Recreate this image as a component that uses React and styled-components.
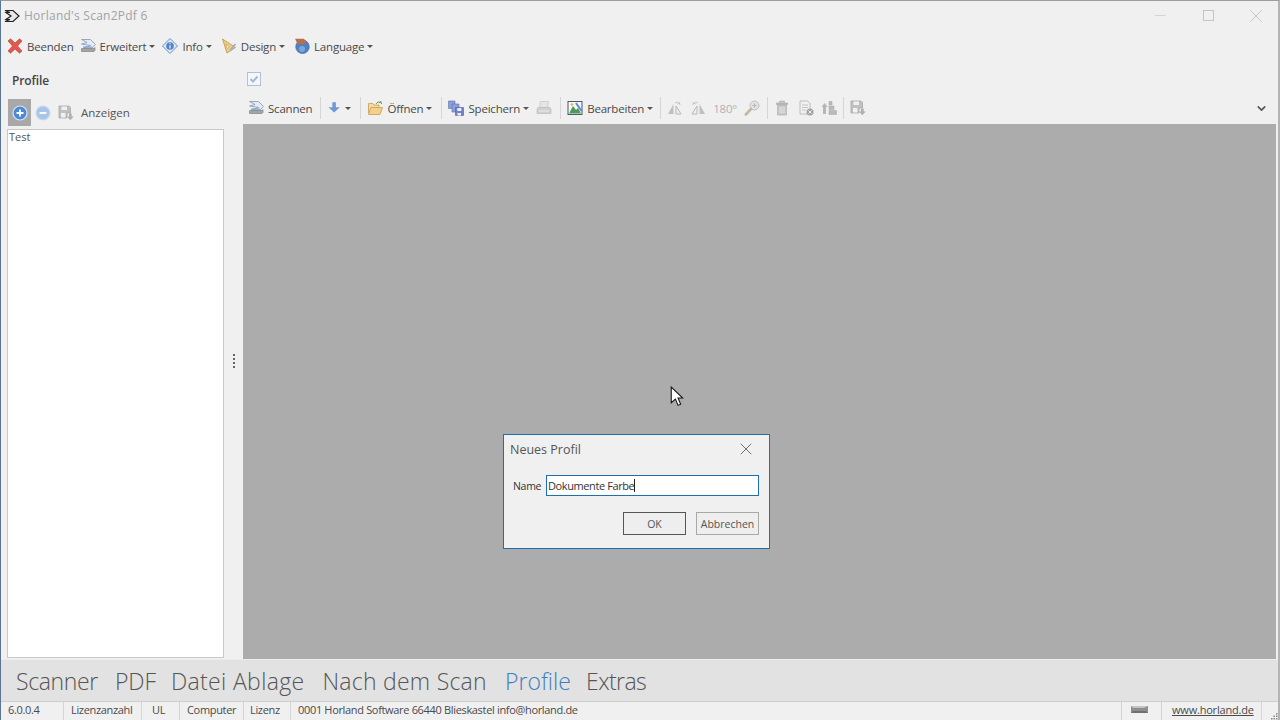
import React from "react";
import styled, { createGlobalStyle } from "styled-components";
import { ChevronDown, Minus, X } from "lucide-react";

const GlobalStyle = createGlobalStyle`
  html, body {
    margin: 0;
    padding: 0;
    width: 1280px;
    height: 720px;
    overflow: hidden;
  }
  body {
    font-family: "Open Sans", "Noto Sans", sans-serif;
    font-size: 12px;
    color: #444;
  }
`;

const Window = styled.div`
  position: relative;
  box-sizing: border-box;
  width: 1280px;
  height: 720px;
  display: flex;
  flex-direction: column;
  background: #f0f0f0;
  border-top: 1px solid #9c9c9c;
  border-left: 1px solid #5a7590;
  border-right: 2px solid #b4b4b4;
  overflow: hidden;
`;

const TitleBar = styled.div`
  height: 29px;
  display: flex;
  align-items: center;
  padding-left: 3px;
  flex-shrink: 0;
`;

const TitleText = styled.span`
  margin-left: 4px;
  font-size: 12px;
  letter-spacing: 0.25px;
  color: #a2a2a2;
`;

const WindowButtons = styled.div`
  margin-left: auto;
  margin-right: -2px;
  display: flex;
  align-items: center;
  color: #bdbdbd;
`;

const WindowButton = styled.div`
  width: 48px;
  height: 20px;
  display: flex;
  align-items: center;
  justify-content: center;
`;

const MaxBox = styled.span`
  width: 9px;
  height: 9px;
  border: 1px solid #c4c4c4;
`;

const MenuBar = styled.div`
  height: 32px;
  display: flex;
  align-items: center;
  padding-left: 6px;
  flex-shrink: 0;
`;

const Item = styled.div`
  display: flex;
  align-items: center;
  gap: 4px;
  margin-left: ${(p) => p.$ml ?? 0}px;
  margin-right: ${(p) => p.$mr ?? 7}px;
  color: ${(p) => (p.$muted ? "#b0b0b0" : "#4a4a4a")};
  white-space: nowrap;
  font-size: 11.5px;
  letter-spacing: -0.2px;
`;

const Caret = styled.span`
  width: 0;
  height: 0;
  margin: 0 -1px;
  border-left: 3px solid transparent;
  border-right: 3px solid transparent;
  border-top: 3px solid #555;
`;

const Main = styled.div`
  flex: 1;
  min-height: 0;
  display: flex;
  padding-top: 1px;
`;

const Sidebar = styled.div`
  width: 223px;
  flex-shrink: 0;
  display: flex;
  flex-direction: column;
  padding-left: 6px;
  box-sizing: border-box;
`;

const SideTitle = styled.div`
  height: 33px;
  padding: 9px 0 0 5px;
  box-sizing: border-box;
  font-weight: 600;
  font-size: 12px;
  letter-spacing: -0.1px;
  color: #444;
`;

const SideTools = styled.div`
  height: 33px;
  display: flex;
  align-items: center;
  padding-left: 1px;
`;

const ToolSlot = styled.div`
  width: 23px;
  height: 27px;
  display: flex;
  align-items: center;
  justify-content: center;
  background: ${(p) => (p.$active ? "#a8a8a8" : "transparent")};
`;

const ShowLabel = styled.span`
  margin-left: 4px;
  font-size: 11.5px;
  color: #555;
`;

const ProfileList = styled.div`
  flex: 1;
  margin-bottom: 1px;
  background: #fff;
  border: 1px solid #c8c8c8;
  padding: 0 1px;
  font-size: 11px;
  line-height: 14px;
  color: #555;
`;

const Splitter = styled.div`
  width: 19px;
  flex-shrink: 0;
  display: flex;
  flex-direction: column;
  align-items: center;
  justify-content: center;
  gap: 2px;
`;

const Dot = styled.span`
  width: 2px;
  height: 2px;
  background: #666;
`;

const Content = styled.div`
  flex: 1;
  min-width: 0;
  display: flex;
  flex-direction: column;
`;

const CheckRow = styled.div`
  height: 30px;
  display: flex;
  align-items: center;
  padding: 2px 0 0 4px;
  box-sizing: border-box;
`;

const CheckBox = styled.div`
  width: 14px;
  height: 14px;
  box-sizing: border-box;
  background: #f4f6fb;
  border: 1px solid #b4bfd6;
  display: flex;
  align-items: center;
  justify-content: center;
`;

const Toolbar = styled.div`
  height: 31px;
  display: flex;
  align-items: center;
  padding: 0 0 1px 5px;
  box-sizing: border-box;
`;

const Sep = styled.span`
  width: 1px;
  height: 22px;
  background: #d6d6d6;
  margin-right: 6px;
`;

const ExpandButton = styled.div`
  margin-left: auto;
  margin-right: 10px;
  display: flex;
  color: #555;
`;

const Canvas = styled.div`
  flex: 1;
  margin-right: 2px;
  background: #acacac;
`;

const TabBar = styled.div`
  height: 42px;
  flex-shrink: 0;
  display: flex;
  align-items: center;
  padding-left: 15px;
  background: #e2e2e2;
  border-top: 1px solid #ececec;
  box-sizing: border-box;
`;

const Tab = styled.span`
  margin-left: ${(p) => p.$ml ?? 0}px;
  font-weight: 300;
  font-size: 23px;
  letter-spacing: ${(p) => p.$ls ?? 0}px;
  color: ${(p) => (p.$active ? "#3f7fbd" : "#555")};
`;

const StatusBar = styled.div`
  height: 19px;
  flex-shrink: 0;
  display: flex;
  background: #f0f0f0;
  border-top: 1px solid #cfcfcf;
  box-sizing: border-box;
  font-size: 11px;
  letter-spacing: -0.33px;
  color: #4a4a4a;
`;

const Cell = styled.div`
  width: ${(p) => p.$w}px;
  flex-shrink: 0;
  box-sizing: border-box;
  padding: 0 0 3px ${(p) => p.$pl ?? 7}px;
  border-right: 1px solid #d4d4d4;
  white-space: nowrap;
  display: flex;
  align-items: center;
`;

const WideCell = styled(Cell)`
  flex: 1;
  width: auto;
`;

const WebLink = styled.span`
  text-decoration: underline;
  font-size: 11px;
  letter-spacing: -0.2px;
`;

const GripCell = styled.div`
  width: 16px;
  flex-shrink: 0;
  display: flex;
  justify-content: flex-end;
  align-items: flex-end;
`;

const Dialog = styled.div`
  position: absolute;
  left: 502px;
  top: 433px;
  width: 267px;
  height: 115px;
  box-sizing: border-box;
  background: #f0f0f0;
  border: 1px solid #1c6fb0;
  display: flex;
  flex-direction: column;
`;

const DialogHead = styled.div`
  height: 28px;
  display: flex;
  align-items: center;
  justify-content: space-between;
  padding: 0 13px 0 6px;
  font-size: 12.5px;
  color: #555;
  box-sizing: border-box;
`;

const DialogRow = styled.div`
  display: flex;
  align-items: center;
  margin-top: 12px;
  padding-left: 9px;
  gap: 5px;
`;

const NameLabel = styled.span`
  width: 28px;
  font-size: 10.5px;
  letter-spacing: -0.3px;
  color: #333;
`;

const NameInput = styled.div`
  width: 213px;
  height: 21px;
  box-sizing: border-box;
  background: #fff;
  border: 1px solid #1f6fae;
  padding-left: 1px;
  display: flex;
  align-items: center;
  font-size: 11px;
  letter-spacing: -0.4px;
  color: #333;
`;

const TextCaret = styled.span`
  width: 1px;
  height: 13px;
  background: #222;
`;

const DialogButtons = styled.div`
  margin-top: 16px;
  display: flex;
  justify-content: flex-end;
  gap: 10px;
  padding-right: 10px;
`;

const DialogButton = styled.div`
  height: 23px;
  width: 63px;
  box-sizing: border-box;
  border: 1px solid ${(p) => (p.$primary ? "#555" : "#a8a8a8")};
  background: #eeeeee;
  display: flex;
  align-items: center;
  justify-content: center;
  font-size: 10.5px;
  color: #555;
`;

const Cursor = styled.svg`
  position: absolute;
  left: 669px;
  top: 385px;
`;

const Ico = ({ size = 16, children, muted }) => (
  <svg width={size} height={size} viewBox="0 0 16 16" style={muted ? { opacity: 0.55 } : undefined}>
    {children}
  </svg>
);

const AppIcon = () => (
  <Ico>
    <path d="M1 2.500h8l6 5.500-6 5.500H1l5-2H2l5-3.500-5-3.500h4z" fill="#e8e8e8" stroke="#222" strokeWidth="1.200" />
  </Ico>
);

const ExitIcon = () => (
  <Ico>
    <path d="M1 3 3.500 .8 8 5 12.500 .8 15 3 10.500 8 15 13 12.500 15.200 8 11 3.500 15.200 1 13 5.500 8z" fill="#e2574e" stroke="#b83a35" strokeWidth=".6" />
  </Ico>
);

const ScanIcon = () => (
  <Ico>
    <path d="M1.500 1.500h9l5 5-3.500 3.500H3.500l7-2.500L1.500 6 7 4.500z" fill="#e4eaf2" stroke="#8497ae" strokeWidth=".8" />
    <path d="M1.500 10.500H14l1-1v3l-1 1H1.500z" fill="#a4a4a4" stroke="#6b6b6b" strokeWidth=".5" />
    <path d="M3 9h9" stroke="#6fa0d8" strokeWidth="1" />
  </Ico>
);

const InfoIcon = () => (
  <Ico>
    <path d="M8 .5 15.500 8 8 15.500.5 8z" fill="#dce7f6" stroke="#6e8fc0" strokeWidth="1" />
    <circle cx="8" cy="8" r="3.800" fill="#4f84c9" />
    <path d="M8 5.300v1M8 7.300v3.200" stroke="#fff" strokeWidth="1.100" />
  </Ico>
);

const DesignIcon = () => (
  <Ico>
    <path d="M1.500 1 14.500 9.500 6 15z" fill="#f0cd85" stroke="#bf9040" strokeWidth=".8" />
    <path d="M5 6l3.500 3-2.500 1.500z" fill="#f7f0dd" stroke="#bf9040" strokeWidth=".5" />
    <path d="M9 12.500l5.500-6.500" stroke="#9ab0cc" strokeWidth="1.800" />
  </Ico>
);

const LanguageIcon = () => (
  <Ico>
    <circle cx="8.500" cy="8.800" r="6.800" fill="#4f7fc4" stroke="#3e659f" strokeWidth=".6" />
    <path d="M1 .8h8.500L13 3.500 9.500 6.500 3.500 6z" fill="#b5714f" />
    <circle cx="8" cy="11" r="3" fill="#7ea5da" />
  </Ico>
);

const PlusIcon = () => (
  <Ico>
    <circle cx="8" cy="8" r="7" fill="#4c88d8" stroke="#d6e6fa" strokeWidth="1.200" />
    <path d="M8 4.500v7M4.500 8h7" stroke="#fff" strokeWidth="1.800" />
  </Ico>
);

const MinusIcon = () => (
  <Ico>
    <circle cx="8" cy="8" r="7" fill="#a9c5e6" stroke="#c9daf0" strokeWidth="1.200" />
    <path d="M4.500 8h7" stroke="#fff" strokeWidth="1.800" />
  </Ico>
);

const SaveDownIcon = () => (
  <Ico muted>
    <path d="M1 1h10l1.500 1.500V8H9v5H1z" fill="#9a9a9a" stroke="#6e6e6e" strokeWidth=".8" />
    <path d="M3.500 1.500h5.500v3.500H3.500zM3 8h4.500v4.500H3z" fill="#f0f0f0" />
    <path d="M11 8.500v3H9l3.300 3.800 3.400-3.800h-2v-3z" fill="#7c7c7c" />
  </Ico>
);

const ArrowDownIcon = () => (
  <Ico size={14}>
    <path d="M5 1.500h4V7h4.500L7 13 .5 7H5z" fill="#6f98d4" />
  </Ico>
);

const OpenIcon = () => (
  <Ico>
    <path d="M1.500 13V3.500H6L7 5h5v3" fill="#f3d9a4" stroke="#c99c52" strokeWidth=".8" />
    <path d="M1.500 14.500 4 7.500h11.500L13 14.500z" fill="#f5d08c" stroke="#c99c52" strokeWidth=".8" />
    <path d="M9 4c1-2 3-2.500 4.500-1.500M14.500 4l-.5-2.500-2 1.500" fill="none" stroke="#62a04a" strokeWidth="1" />
  </Ico>
);

const SaveAllIcon = () => (
  <Ico>
    <path d="M.5 1h6.500v7.500H.5z" fill="#8ea0d8" stroke="#5d6ea8" strokeWidth=".6" />
    <path d="M4 4h7v8H4z" fill="#8ea0d8" stroke="#5d6ea8" strokeWidth=".6" />
    <path d="M7.500 7.500h8v8h-8z" fill="#6f83c6" stroke="#4d5e98" strokeWidth=".6" />
    <path d="M9.300 8h4v3h-4zM9.500 13H13v2.500H9.500z" fill="#eef" />
  </Ico>
);

const PrintIcon = () => (
  <Ico>
    <path d="M4.500 1.500h8l-1 6h-8z" fill="#e4e4e4" stroke="#c4c4c4" strokeWidth=".7" />
    <path d="M2 7.500h12l1 2v4H1v-4z" fill="#d0d0d0" stroke="#bababa" strokeWidth=".7" />
    <path d="M3 11h10" stroke="#ececec" />
  </Ico>
);

const EditIcon = () => (
  <Ico>
    <rect x="1" y="1.500" width="14" height="13" fill="#f5f7f8" stroke="#48596a" strokeWidth="1" />
    <path d="M2 13.500 6 6l3 4 2-2 3 5.500z" fill="#4d9a58" />
    <path d="M9 3l5.500 8" stroke="#5f8fcc" strokeWidth="2" />
    <circle cx="5" cy="4.500" r="1.300" fill="#e4b24f" />
  </Ico>
);

const FlipIcon = ({ mirror }) => (
  <Ico muted>
    <g transform={mirror ? "matrix(-1 0 0 1 16 0)" : undefined}>
      <path d="M1 14 6.500 4v10z" fill="#9a9a9a" />
      <path d="M9 14V6l5 8z" fill="none" stroke="#8a8a8a" strokeWidth="1" />
      <path d="M8 3c2-1.500 3.500-.5 4 1M13 5l-.5-2.500-2 1.500" fill="none" stroke="#8a8a8a" strokeWidth=".8" />
    </g>
  </Ico>
);

const ZoomIcon = () => (
  <Ico muted>
    <circle cx="10.500" cy="5.500" r="4.500" fill="#d8d8d8" stroke="#999" strokeWidth="1" />
    <path d="M8.500 5.500h4M10.500 3.500v4" stroke="#888" strokeWidth="1" />
    <path d="M7 9 1.800 14.500" stroke="#a08c60" strokeWidth="2.600" strokeLinecap="round" />
  </Ico>
);

const TrashIcon = () => (
  <Ico muted>
    <path d="M5.500 2.500V1.200h5v1.300M2.500 3h11v1.500h-11z" fill="#8a8a8a" stroke="#777" strokeWidth=".7" />
    <path d="M3.500 5h9v10h-9z" fill="#a2a2a2" stroke="#7c7c7c" strokeWidth=".7" />
    <path d="M6 6.500v7M8 6.500v7M10 6.500v7" stroke="#e4e4e4" strokeWidth=".9" />
  </Ico>
);

const DocRemoveIcon = () => (
  <Ico muted>
    <path d="M2 1h7.500L12 3.500V14H2z" fill="#f2f2f2" stroke="#8a8a8a" strokeWidth=".9" />
    <path d="M4 5h6M4 7.500h6M4 10h4" stroke="#8a8a8a" strokeWidth=".8" />
    <circle cx="12" cy="12" r="3.500" fill="#666" />
    <path d="M10.500 10.500l3 3M13.500 10.500l-3 3" stroke="#fff" strokeWidth=".9" />
  </Ico>
);

const SortIcon = () => (
  <Ico muted>
    <path d="M3.500 3 6.800 7H5v7H2V7H.5z" fill="#8a8a8a" />
    <path d="M8 1.500h3V5H8zM8 6h5v3.500H8zM8 10.500h7.500V14.500H8z" fill="#8f8f8f" stroke="#6f6f6f" strokeWidth=".5" />
  </Ico>
);

const CheckMark = () => (
  <svg width="10" height="10" viewBox="0 0 10 10">
    <path d="M1.500 5 4 7.500 8.500 2.500" fill="none" stroke="#a9b8d8" strokeWidth="2" />
  </svg>
);

const PluggedIcon = () => (
  <svg width="17" height="7" viewBox="0 0 17 7">
    <rect width="17" height="7" fill="#8e8e8e" />
    <path d="M0 0h17l-4 2H2z" fill="#c4c4c4" />
    <path d="M2 5h13l2 2H0z" fill="#6f6f6f" />
  </svg>
);

const ResizeGrip = () => (
  <svg width="7" height="7" viewBox="0 0 7 7" fill="#8a8a8a">
    <rect x="5" y="0" width="1.500" height="1.500" />
    <rect x="2.500" y="2.500" width="1.500" height="1.500" />
    <rect x="5" y="2.500" width="1.500" height="1.500" />
    <rect x="0" y="5" width="1.500" height="1.500" />
    <rect x="2.500" y="5" width="1.500" height="1.500" />
    <rect x="5" y="5" width="1.500" height="1.500" />
  </svg>
);

const CloseGlyph = ({ size, color }) => (
  <X size={size} strokeWidth={0.9} color={color} />
);

export default function App() {
  return (
    <Window>
      <GlobalStyle />
      <TitleBar>
        <AppIcon />
        <TitleText>Horland's Scan2Pdf 6</TitleText>
        <WindowButtons>
          <WindowButton><Minus size={17} strokeWidth={0.8} /></WindowButton>
          <WindowButton><MaxBox /></WindowButton>
          <WindowButton><CloseGlyph size={22} color="#bdbdbd" /></WindowButton>
        </WindowButtons>
      </TitleBar>
      <MenuBar>
        <Item $mr={6}><ExitIcon />Beenden</Item>
        <Item $mr={8}><ScanIcon />Erweitert<Caret /></Item>
        <Item $mr={10}><InfoIcon />Info<Caret /></Item>
        <Item $mr={10}><DesignIcon />Design<Caret /></Item>
        <Item><LanguageIcon />Language<Caret /></Item>
      </MenuBar>
      <Main>
        <Sidebar>
          <SideTitle>Profile</SideTitle>
          <SideTools>
            <ToolSlot $active><PlusIcon /></ToolSlot>
            <ToolSlot><MinusIcon /></ToolSlot>
            <ToolSlot><SaveDownIcon /></ToolSlot>
            <ShowLabel>Anzeigen</ShowLabel>
          </SideTools>
          <ProfileList>Test</ProfileList>
        </Sidebar>
        <Splitter>
          <Dot /><Dot /><Dot /><Dot />
        </Splitter>
        <Content>
          <CheckRow>
            <CheckBox><CheckMark /></CheckBox>
          </CheckRow>
          <Toolbar>
            <Item $mr={8}><ScanIcon />Scannen</Item>
            <Sep />
            <Item $ml={1} $mr={10}><ArrowDownIcon /><Caret /></Item>
            <Sep />
            <Item $mr={10}><OpenIcon />Öffnen<Caret /></Item>
            <Sep />
            <Item $mr={8}><SaveAllIcon />Speichern<Caret /></Item>
            <Item $mr={8}><PrintIcon /></Item>
            <Sep />
            <Item $mr={8}><EditIcon />Bearbeiten<Caret /></Item>
            <Sep />
            <Item><FlipIcon /></Item>
            <Item $mr={7}><FlipIcon mirror /></Item>
            <Item $muted>180°</Item>
            <Item><ZoomIcon /></Item>
            <Sep />
            <Item $mr={8}><TrashIcon /></Item>
            <Item><DocRemoveIcon /></Item>
            <Item $mr={6}><SortIcon /></Item>
            <Sep />
            <Item><SaveDownIcon /></Item>
            <ExpandButton><ChevronDown size={13} strokeWidth={3} /></ExpandButton>
          </Toolbar>
          <Canvas />
        </Content>
      </Main>
      <TabBar>
        <Tab $ls={-0.35}>Scanner</Tab>
        <Tab $ml={17} $ls={-0.1}>PDF</Tab>
        <Tab $ml={15} $ls={0.35}>Datei Ablage</Tab>
        <Tab $ml={18} $ls={0.25}>Nach dem Scan</Tab>
        <Tab $ml={18} $ls={0.05} $active>Profile</Tab>
        <Tab $ml={15} $ls={-0.6}>Extras</Tab>
      </TabBar>
      <StatusBar>
        <Cell $w={63}>6.0.0.4</Cell>
        <Cell $w={78}>Lizenzanzahl</Cell>
        <Cell $w={38} $pl={10}>UL</Cell>
        <Cell $w={64}>Computer</Cell>
        <Cell $w={47} $pl={6}>Lizenz</Cell>
        <WideCell>0001 Horland Software 66440 Blieskastel info@horland.de</WideCell>
        <Cell $w={40} $pl={9}><PluggedIcon /></Cell>
        <Cell $w={100} $pl={10}><WebLink>www.horland.de</WebLink></Cell>
        <GripCell><ResizeGrip /></GripCell>
      </StatusBar>
      <Dialog>
        <DialogHead>
          Neues Profil
          <CloseGlyph size={20} color="#444" />
        </DialogHead>
        <DialogRow>
          <NameLabel>Name</NameLabel>
          <NameInput>Dokumente Farbe<TextCaret /></NameInput>
        </DialogRow>
        <DialogButtons>
          <DialogButton $primary>OK</DialogButton>
          <DialogButton>Abbrechen</DialogButton>
        </DialogButtons>
      </Dialog>
      <Cursor width="14" height="22" viewBox="0 0 13 21">
        <path d="M1 1v15l4-3.500 2.500 6 2.500-1-2.500-6H12z" fill="#fff" stroke="#111" strokeWidth="1" />
      </Cursor>
    </Window>
  );
}
